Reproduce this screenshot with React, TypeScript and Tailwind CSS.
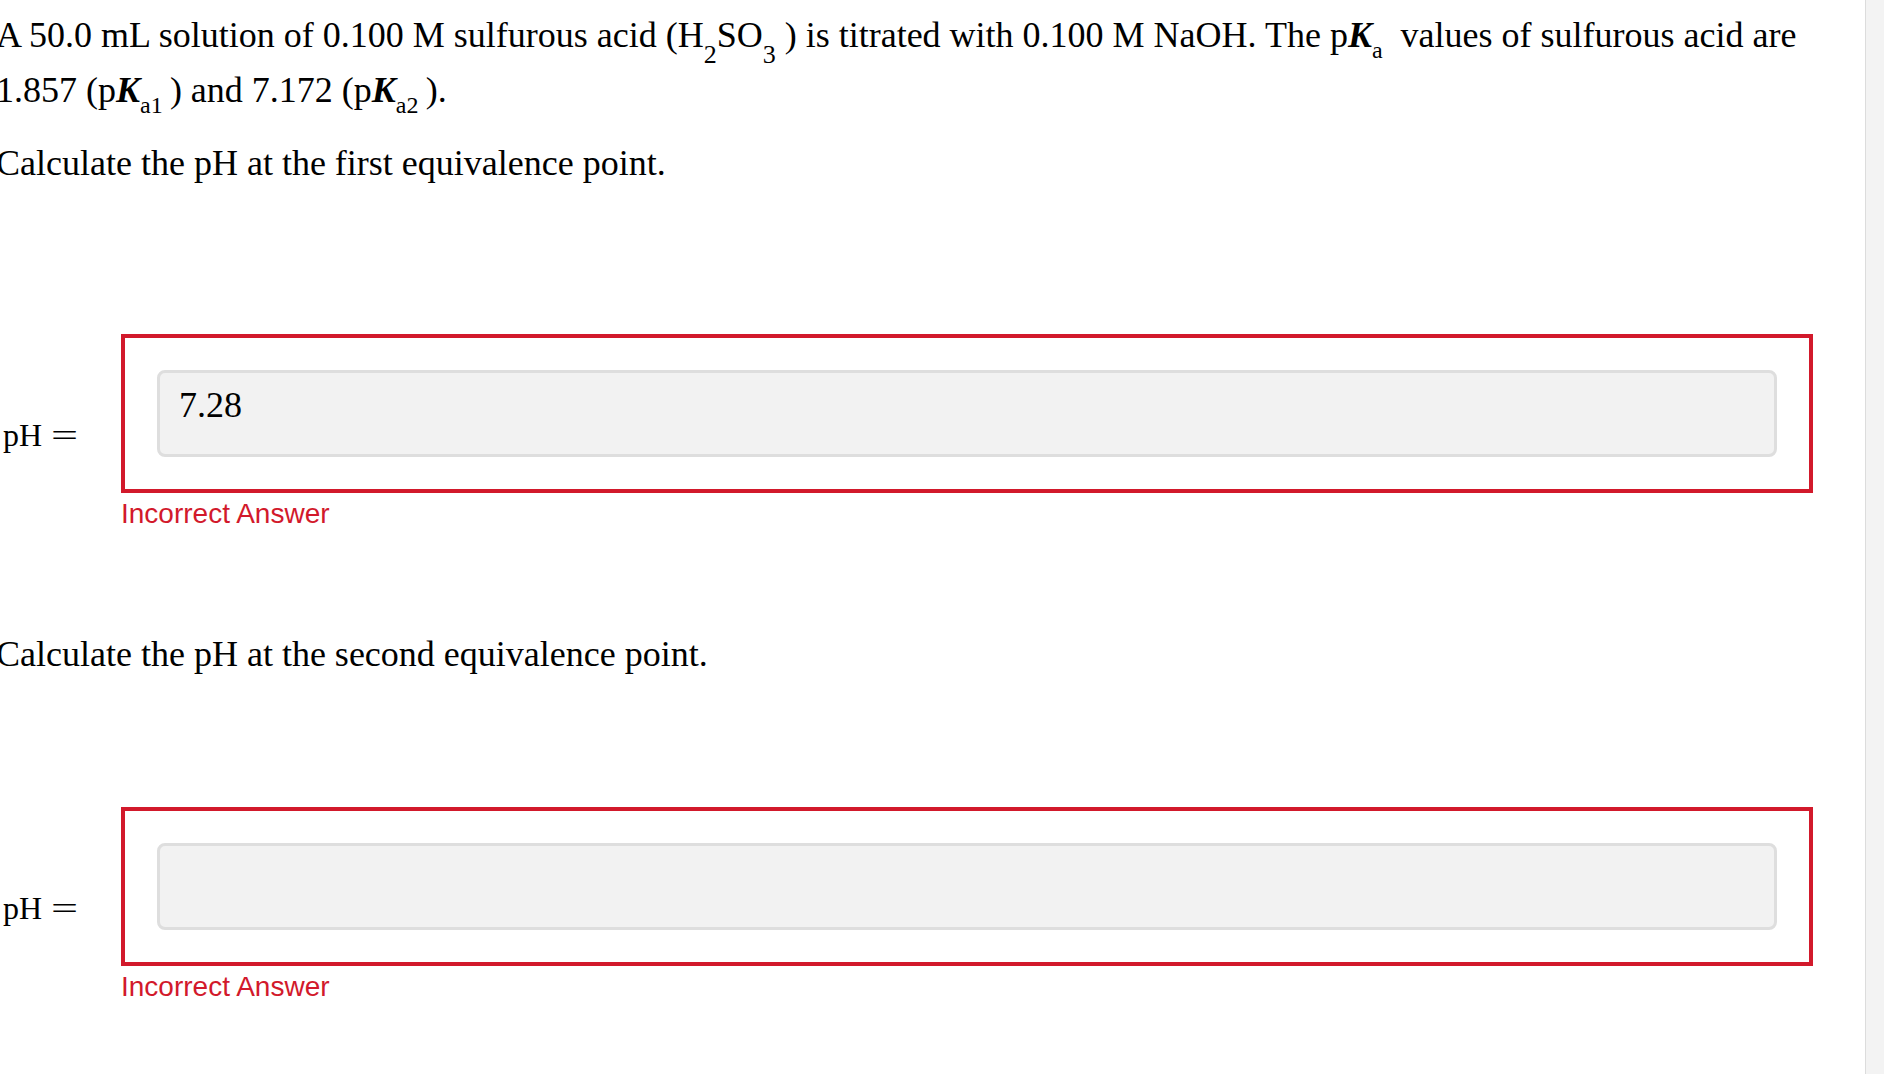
import React from "react";

const serif = { fontFamily: '"Liberation Serif", "Times New Roman", serif' };
const sans = { fontFamily: '"Liberation Sans", Arial, sans-serif' };

// p K with a subscript, as typeset math
function Pka({ sub }: { sub: string }) {
  return (
    <span>
      p<span className="italic font-semibold">K</span>
      <sub className="text-[24px] align-[-5px] leading-none">{sub}</sub>
    </span>
  );
}

function Sub({ children }: { children: React.ReactNode }) {
  return <sub className="text-[26px] align-[-9px] leading-none">{children}</sub>;
}

function AnswerRow({ value }: { value?: string }) {
  return (
    <div>
      <div className="flex items-start">
        <div className="w-[121px] shrink-0 pt-[83px] pl-[3px] text-[32px] leading-[36px] text-black" style={serif}>
          pH<span className="ml-[9px] inline-block scale-x-[1.5] origin-left">=</span>
        </div>
        <div className="w-[1692px] h-[159px] border-[4px] border-[#d2192b] p-[32px]">
          <div className="h-[87px] rounded-[8px] border-[3px] border-[#dedede] bg-[#f2f2f2] pl-[19px] pt-[10px] text-[36px] leading-[44px] text-black" style={serif}>
            {value}
          </div>
        </div>
      </div>
      <div className="ml-[121px] mt-[3px] text-[28px] leading-[36px] text-[#d2192b]" style={sans}>
        Incorrect Answer
      </div>
    </div>
  );
}

export default function App() {
  return (
    <div className="w-[1884px] h-[1074px] bg-white flex overflow-hidden">
      <div className="flex-1 min-w-0">
        <div className="-ml-[4px] text-black text-[36px] leading-[55px]" style={serif}>
          <p className="mt-[8px]">
            A 50.0 mL solution of 0.100 M sulfurous acid (H<Sub>2</Sub>SO<Sub>3</Sub>&nbsp;) is titrated with 0.100 M NaOH.
            The <Pka sub="a" />
            &nbsp; values of sulfurous acid are
            <br />
            1.857 (<Pka sub="a1" />
            &thinsp;) and 7.172 (<Pka sub="a2" />
            &thinsp;).
          </p>
          <p className="mt-[18px]">Calculate the pH at the first equivalence point.</p>
        </div>

        <div className="mt-[143px]">
          <AnswerRow value="7.28" />
        </div>

        <p className="-ml-[4px] mt-[95px] text-[36px] leading-[55px] text-black" style={serif}>
          Calculate the pH at the second equivalence point.
        </p>

        <div className="mt-[125px]">
          <AnswerRow />
        </div>
      </div>
      <div className="w-[19px] shrink-0 bg-[#f3f3f3] border-l border-[#dcdcdc]" />
    </div>
  );
}
